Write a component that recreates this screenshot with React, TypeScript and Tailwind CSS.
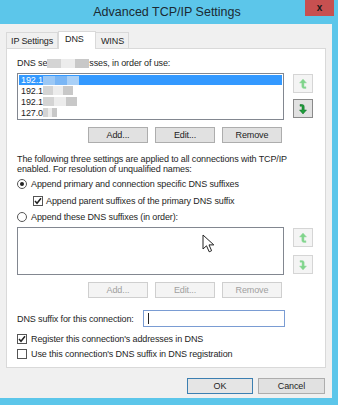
import React from "react"

const font = { fontFamily: '"Liberation Sans", Arial, sans-serif' }

function Blur({ w, dark = false }: { w: number; dark?: boolean }) {
    return (
        <span className="inline-flex h-[9px] align-middle" style={{ width: w }}>
            <span className={dark ? "flex-1 bg-[#9cc8f5]" : "flex-1 bg-[#d4d4d4]"} />
            <span className={dark ? "flex-1 bg-[#7ab6f5]" : "flex-1 bg-[#ececec]"} />
            <span className={dark ? "flex-1 bg-[#a9d0f7]" : "flex-1 bg-[#c8c8c8]"} />
        </span>
    )
}

function Arrow({ down = false, strong = false }: { down?: boolean; strong?: boolean }) {
    const color = strong ? "#1e9e3a" : "#7fd48a"
    return (
        <svg width="10" height="12" viewBox="0 0 10 12" className={down ? "rotate-180" : ""}>
            <path d="M5 1 L1.5 5 L3.8 5 L3.8 8.5 Q3.8 10.5 6 10.5 L8 10.5 L8 8.8 L6.4 8.8 Q6 8.8 6 8.3 L6 5 L8.5 5 Z" fill={color} stroke={strong ? "#0f6b25" : "#9fdca8"} strokeWidth="0.5" />
        </svg>
    )
}

function SideButton({ down = false, strong = false }: { down?: boolean; strong?: boolean }) {
    return (
        <div className={strong ? "w-[20px] h-[19px] flex items-center justify-center border border-[#8a8a8a] bg-[#e1e1e1]" : "w-[20px] h-[19px] flex items-center justify-center border border-[#d5d5d5] bg-[#f4f4f4]"}>
            <Arrow down={down} strong={strong} />
        </div>
    )
}

function Btn({ label, disabled = false }: { label: string; disabled?: boolean }) {
    return (
        <div className={disabled ? "w-[60px] h-[16px] flex items-center justify-center border border-[#cfcfcf] bg-[#f4f4f4] text-[#a0a0a0]" : "w-[60px] h-[16px] flex items-center justify-center border border-[#adadad] bg-[#e1e1e1] text-[#222]"}>
            {label}
        </div>
    )
}

function Radio({ checked = false }: { checked?: boolean }) {
    return (
        <span className="w-[10px] h-[10px] rounded-full border border-[#555] bg-white flex items-center justify-center shrink-0">
            {checked && <span className="w-[4px] h-[4px] rounded-full bg-[#222]" />}
        </span>
    )
}

function Check({ checked = false }: { checked?: boolean }) {
    return (
        <span className="w-[10px] h-[10px] border border-[#555] bg-white flex items-center justify-center shrink-0">
            {checked && (
                <svg width="8" height="8" viewBox="0 0 8 8">
                    <path d="M1 4 L3 6.3 L7 1.2" fill="none" stroke="#222" strokeWidth="1.5" />
                </svg>
            )}
        </span>
    )
}

export default function App() {
    return (
        <div className="w-[338px] h-[405px] bg-[#5cc6ea] flex flex-col text-[9px] tracking-[-0.12px] text-[#1e1e1e] leading-[10px] overflow-hidden" style={font}>
            {/* title bar */}
            <div className="h-[24px] relative flex items-center justify-center shrink-0">
                <span className="text-[12.5px] tracking-normal leading-[16px] text-[#1b2a33] pr-[4px]">Advanced TCP/IP Settings</span>
                <div className="absolute right-[4px] top-0 w-[29px] h-[16px] bg-[#c75050] flex items-center justify-center text-[10px] font-bold text-[#1a1a1a]">x</div>
            </div>

            {/* window body */}
            <div className="flex-1 mr-[6px] mb-[7px] bg-[#f0f0f0] flex flex-col px-[6px]">
                {/* tabs */}
                <div className="flex items-end h-[24px] whitespace-nowrap">
                    <div className="h-[16px] px-[4px] flex items-center border border-b-0 border-[#d9d9d9] bg-[#f0f0f0] w-[52px] shrink-0">IP Settings</div>
                    <div className="h-[18px] px-[6px] flex items-start pt-[2px] border border-b-0 border-[#d9d9d9] bg-white w-[38px] -mb-px relative z-10 shrink-0">DNS</div>
                    <div className="h-[16px] px-[5px] flex items-center border border-b-0 border-l-0 border-[#d9d9d9] bg-[#f0f0f0] w-[33px] shrink-0">WINS</div>
                </div>

                {/* panel */}
                <div className="h-[320px] bg-white border border-[#d9d9d9] pl-[10px] pr-[12px] pt-[9px] flex flex-col">
                    <div className="h-[10px] flex items-center">
                        DNS se<Blur w={42} />sses, in order of use:
                    </div>
                    <div className="flex mt-[5px] gap-[9px]">
                        <div className="w-[268px] h-[47px] border border-[#828790] bg-white p-px flex flex-col">
                            <div className="h-[10px] bg-[#3399ff] text-white flex items-center pl-[2px]">192.1<Blur w={36} dark /></div>
                            <div className="h-[11px] flex items-center pl-[2px]">192.1<Blur w={30} /></div>
                            <div className="h-[11px] flex items-center pl-[2px]">192.1<Blur w={34} /></div>
                            <div className="h-[11px] flex items-center pl-[2px]">127.0<Blur w={14} /></div>
                        </div>
                        <div className="flex flex-col gap-[6px] pt-px">
                            <SideButton />
                            <SideButton down strong />
                        </div>
                    </div>
                    <div className="flex gap-[7px] mt-[7px] ml-[71px]">
                        <Btn label="Add..." />
                        <Btn label="Edit..." />
                        <Btn label="Remove" />
                    </div>

                    <p className="mt-[11px] leading-[10px]">
                        The following three settings are applied to all connections with TCP/IP enabled. For resolution of unqualified names:
                    </p>
                    <div className="flex items-center gap-[4px] mt-[3px] h-[14px]">
                        <Radio checked />
                        <span>Append primary and connection specific DNS suffixes</span>
                    </div>
                    <div className="flex items-center gap-[3px] mt-[3px] h-[14px] ml-[16px]">
                        <Check checked />
                        <span>Append parent suffixes of the primary DNS suffix</span>
                    </div>
                    <div className="flex items-center gap-[4px] mt-[2px] h-[14px]">
                        <Radio />
                        <span>Append these DNS suffixes (in order):</span>
                    </div>
                    <div className="flex mt-[3px] gap-[9px]">
                        <div className="w-[268px] h-[48px] border border-[#828790] bg-white relative">
                            <svg width="14" height="20" viewBox="0 0 14 20" className="absolute left-[184px] top-[6px]">
                                <path d="M1 1 L1 15 L4.5 11.8 L7.2 17.8 L9.6 16.7 L7 10.9 L11.8 10.9 Z" fill="white" stroke="#222" strokeWidth="1" strokeLinejoin="round" />
                            </svg>
                        </div>
                        <div className="flex flex-col gap-[8px] pt-px">
                            <SideButton />
                            <SideButton down />
                        </div>
                    </div>
                    <div className="flex gap-[7px] mt-[7px] ml-[71px]">
                        <Btn label="Add..." disabled />
                        <Btn label="Edit..." disabled />
                        <Btn label="Remove" disabled />
                    </div>

                    <div className="flex items-center mt-[12px] gap-[3px]">
                        <span className="w-[123px]">DNS suffix for this connection:</span>
                        <div className="w-[142px] h-[17px] border border-[#7a9cd3] bg-white flex items-center pl-[4px]">
                            <span className="w-px h-[11px] bg-[#222]" />
                        </div>
                    </div>
                    <div className="flex items-center gap-[4px] mt-[5px] h-[13px]">
                        <Check checked />
                        <span>Register this connection's addresses in DNS</span>
                    </div>
                    <div className="flex items-center gap-[4px] mt-[2px] h-[13px]">
                        <Check />
                        <span>Use this connection's DNS suffix in DNS registration</span>
                    </div>
                </div>

                {/* dialog buttons */}
                <div className="flex justify-end gap-[5px] mt-[10px] pr-[1px]">
                    <div className="w-[66px] h-[16px] border border-[#3c7fb1] bg-[#e5e5e5] flex items-center justify-center">OK</div>
                    <div className="w-[67px] h-[16px] border border-[#adadad] bg-[#e1e1e1] flex items-center justify-center">Cancel</div>
                </div>
            </div>
        </div>
    )
}
